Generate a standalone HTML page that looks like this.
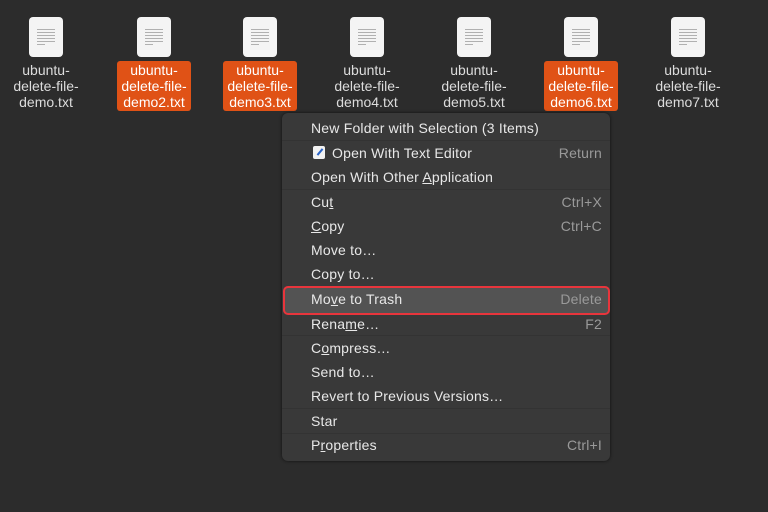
<!DOCTYPE html><html><head><style>
body{margin:0;width:768px;height:512px;background:#2c2c2c;font-family:"Liberation Sans",sans-serif;overflow:hidden;position:relative}
.f{position:absolute;top:17px;width:100px;text-align:center}
.ic{width:34px;height:40px;margin:0 auto;background:#f4f4f4;border-radius:4px;position:relative}
.ic i{position:absolute;left:8px;height:1px;background:#b0b0b0;width:18px}
.lb{display:inline-block;margin-top:4px;padding:1px 4px 1px;font-size:14px;line-height:16px;color:#dcdcdc;border-radius:3px}
.sel .lb{background:#e05216;color:#fff}
.m{position:absolute;left:282px;top:113px;width:328px;height:348px;background:#393939;border-radius:6px;box-shadow:0 0 3px #111;font-size:14px;letter-spacing:0.2px;color:#e8e8e8}
.r{position:absolute;left:29px;right:8px;height:20px;line-height:20px}
.r span{float:right;color:#9a9a9a}
.s{position:absolute;left:0;right:0;height:1px;background:#333}
.h{position:absolute;left:1px;width:323px;top:173px;height:25px;border:2px solid #e8353c;border-radius:5px;background:#535353}
</style></head><body>
<div class="f" style="left:-4px"><div class="ic"><i style="top:12px"></i><i style="top:15px"></i><i style="top:18px"></i><i style="top:21px"></i><i style="top:24px"></i><i style="top:27px;width:8px"></i></div><div class="lb">ubuntu-<br>delete-file-<br>demo.txt</div></div>
<div class="f sel" style="left:104px"><div class="ic"><i style="top:12px"></i><i style="top:15px"></i><i style="top:18px"></i><i style="top:21px"></i><i style="top:24px"></i><i style="top:27px;width:8px"></i></div><div class="lb">ubuntu-<br>delete-file-<br>demo2.txt</div></div>
<div class="f sel" style="left:210px"><div class="ic"><i style="top:12px"></i><i style="top:15px"></i><i style="top:18px"></i><i style="top:21px"></i><i style="top:24px"></i><i style="top:27px;width:8px"></i></div><div class="lb">ubuntu-<br>delete-file-<br>demo3.txt</div></div>
<div class="f" style="left:317px"><div class="ic"><i style="top:12px"></i><i style="top:15px"></i><i style="top:18px"></i><i style="top:21px"></i><i style="top:24px"></i><i style="top:27px;width:8px"></i></div><div class="lb">ubuntu-<br>delete-file-<br>demo4.txt</div></div>
<div class="f" style="left:424px"><div class="ic"><i style="top:12px"></i><i style="top:15px"></i><i style="top:18px"></i><i style="top:21px"></i><i style="top:24px"></i><i style="top:27px;width:8px"></i></div><div class="lb">ubuntu-<br>delete-file-<br>demo5.txt</div></div>
<div class="f sel" style="left:531px"><div class="ic"><i style="top:12px"></i><i style="top:15px"></i><i style="top:18px"></i><i style="top:21px"></i><i style="top:24px"></i><i style="top:27px;width:8px"></i></div><div class="lb">ubuntu-<br>delete-file-<br>demo6.txt</div></div>
<div class="f" style="left:638px"><div class="ic"><i style="top:12px"></i><i style="top:15px"></i><i style="top:18px"></i><i style="top:21px"></i><i style="top:24px"></i><i style="top:27px;width:8px"></i></div><div class="lb">ubuntu-<br>delete-file-<br>demo7.txt</div></div>
<div class="m">
<div class="s" style="top:27px"></div><div class="s" style="top:76px"></div><div class="s" style="top:222px"></div><div class="s" style="top:295px"></div><div class="s" style="top:320px"></div>
<div class="h"></div>
<div class="r" style="top:5px">New Folder with Selection (3 Items)</div>
<div class="r" style="top:30px"><b style="position:absolute;left:2px;top:3px;width:12px;height:13px;background:#f2f2f2;border-radius:2px"><b style="position:absolute;left:3px;top:5px;width:8px;height:2px;background:#2a64c8;transform:rotate(-50deg)"></b></b><span style="margin-left:0">Return</span><em style="font-style:normal;margin-left:21px">Open With Text Editor</em></div>
<div class="r" style="top:54px">Open With Other <u>A</u>pplication</div>
<div class="r" style="top:79px">Cu<u>t</u><span>Ctrl+X</span></div>
<div class="r" style="top:103px"><u>C</u>opy<span>Ctrl+C</span></div>
<div class="r" style="top:127px">Move to…</div>
<div class="r" style="top:151px">Copy to…</div>
<div class="r" style="top:176px">Mo<u>v</u>e to Trash<span>Delete</span></div>
<div class="r" style="top:201px">Rena<u>m</u>e…<span>F2</span></div>
<div class="r" style="top:225px">C<u>o</u>mpress…</div>
<div class="r" style="top:249px">Send to…</div>
<div class="r" style="top:273px">Revert to Previous Versions…</div>
<div class="r" style="top:298px">Star</div>
<div class="r" style="top:322px">P<u>r</u>operties<span>Ctrl+I</span></div>
</div>
</body></html>
